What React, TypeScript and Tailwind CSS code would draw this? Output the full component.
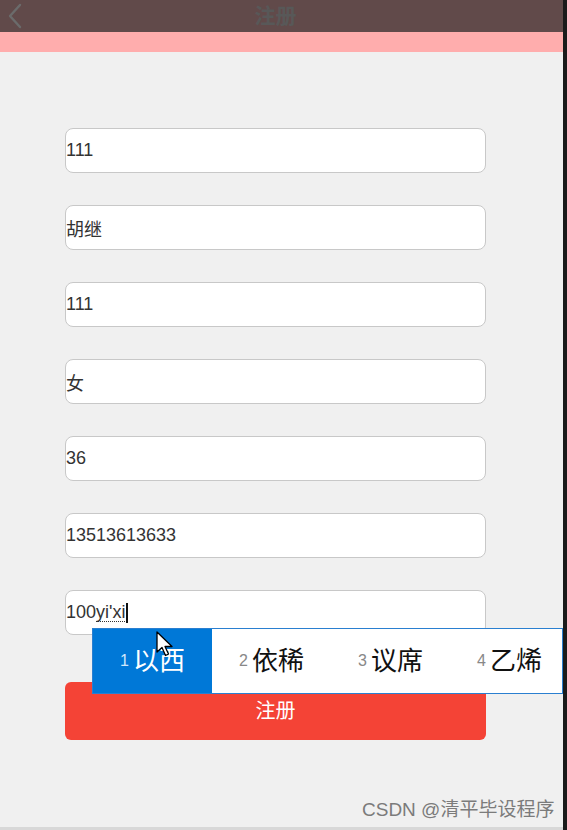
import React from "react";

const fields = ["111", "胡继", "111", "女", "36", "13513613633"];
const candidates = ["以西", "依稀", "议席", "乙烯"];

const font = { fontFamily: '"Liberation Sans", Arial, "Noto Sans CJK SC", sans-serif' };

export default function App() {
  return (
    <div className="relative flex h-[830px] w-[567px] overflow-hidden bg-[#1b1b1b]" style={font}>
      <div className="flex w-[563px] flex-col bg-[#f0f0f0]">
        {/* header, dimmed */}
        <div className="relative flex h-[32px] items-center justify-center bg-[#614a4a] pr-[12px]">
          <svg className="absolute left-[7px] top-[3px]" width="16" height="26" viewBox="0 0 16 26" fill="none">
            <path d="M13 2 L3 13 L13 24" stroke="#6b6b6b" strokeWidth="2.4" strokeLinecap="round" strokeLinejoin="round" />
          </svg>
          <span className="text-[21px] font-bold text-[#585858]">注册</span>
        </div>
        <div className="h-[20px] bg-[#ffadad]" />

        <div className="flex flex-col gap-[32px] pl-[65px] pt-[76px]">
          {fields.map((v, i) => (
            <input
              key={i}
              readOnly
              defaultValue={v}
              className="h-[45px] w-[421px] rounded-[8px] border border-[#c8c8c8] bg-white px-0 text-[18px] text-[#333] outline-none"
              style={font}
            />
          ))}
          <div className="flex h-[45px] w-[421px] items-center rounded-[8px] border border-[#c8c8c8] bg-white text-[18px] text-[#333]">
            <span>100</span>
            <span className="border-b border-dotted border-[#333] leading-[18px]">yi'xi</span>
            <span className="ml-[1px] h-[20px] w-[1.5px] bg-[#111]" />
          </div>
        </div>

        <div className="pl-[65px] pt-[47px]">
          <button className="flex h-[58px] w-[421px] items-center justify-center rounded-[6px] bg-[#f44336] text-[20px] text-white">
            注册
          </button>
        </div>
      </div>

      {/* IME candidate window */}
      <div className="absolute left-[92px] top-[628px] flex h-[66px] w-[471px] overflow-hidden border border-[#2a7fd0] bg-white">
        {candidates.map((c, i) => (
          <div
            key={c}
            className={
              i === 0
                ? "flex h-full w-[119px] shrink-0 items-center justify-center gap-[4px] bg-[#0078d7] text-white"
                : "flex h-full w-[119px] shrink-0 items-center justify-center gap-[4px] text-[#111]"
            }
          >
            <span className={i === 0 ? "text-[16px] text-[#cfe6fb]" : "text-[16px] text-[#888]"}>{i + 1}</span>
            <span className="text-[26px]">{c}</span>
          </div>
        ))}
      </div>

      {/* mouse pointer */}
      <svg className="absolute left-[156px] top-[631px]" width="20" height="28" viewBox="0 0 20 28">
        <path d="M1 1 L1 21 L6 16.5 L9.5 24.5 L12.5 23 L9 15.5 L16 15.5 Z" fill="#fff" stroke="#000" strokeWidth="1.3" strokeLinejoin="round" />
      </svg>

      <div className="absolute left-[362px] top-[796px] text-[19px] text-[#7b7b7b]">CSDN @清平毕设程序</div>
      <div className="absolute bottom-0 left-0 h-[3px] w-[563px] bg-[#d8d8d8]" />
    </div>
  );
}
